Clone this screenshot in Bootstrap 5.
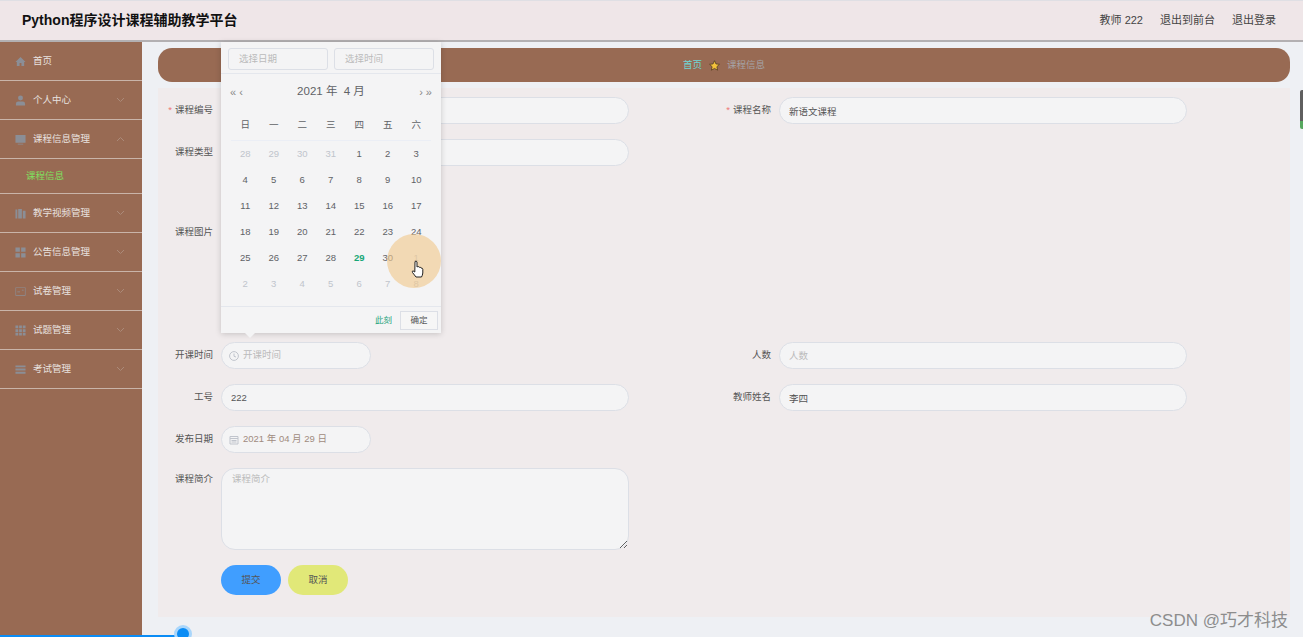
<!DOCTYPE html>
<html lang="zh">
<head>
  <meta charset="UTF-8">
  <meta name="viewport" content="width=device-width, initial-scale=1.0">
  <title>Python程序设计课程辅助教学平台</title>
  <link href="https://cdn.jsdelivr.net/npm/bootstrap@5.3.0/dist/css/bootstrap.min.css" rel="stylesheet">
  <style>
    html, body { height: 100%; overflow: hidden; }
    body { font-family: "Liberation Sans", "Noto Sans CJK SC", sans-serif; background: #eef0f4; font-size: 9.5px; color: #555; }
    .top-bar { height: 42px; background: #efe6e8; border-top: 1px solid #dfdfe4; border-bottom: 2px solid #b3b0b2; padding: 0 27px 0 22px; }
    .top-title { font-size: 14px; font-weight: 700; color: #111; }
    .top-links { font-size: 11px; color: #444; gap: 17px; }
    .side-menu { width: 142px; height: 595px; background: #986a53; color: #e9e3e0; }
    .side-item { height: 39px; border-bottom: 1px solid #c9b4a9; padding: 0 15px; gap: 7px; font-size: 9.5px; }
    .side-item svg.ico { width: 11px; height: 11px; fill: #8b8e96; flex: none; }
    .side-item svg.chev { width: 9px; height: 6px; margin-left: auto; margin-right: 2px; fill: none; stroke: #ab8a79; stroke-width: 1; }
    .side-sub { height: 35px; border-bottom: 1px solid #c9b4a9; padding-left: 26px; color: #7fe05f; font-size: 9.5px; }
    .content-area { padding: 6px 13px 0 16px; }
    .crumb-bar { height: 34px; background: #986a53; border-radius: 14px; font-size: 9.5px; gap: 7px; margin-bottom: 6px; }
    .crumb-home { color: #6fd6d6; }
    .crumb-now { color: #a5a3a6; }
    .form-panel { height: 529px; background: #f0ebec; padding: 9px 8px 0; }
    .field-row { margin-bottom: 15px; }
    .field-label { width: 47px; flex: none; text-align: right; margin-right: 8px; white-space: nowrap; color: #555; }
    .field-label i { color: #e77; font-style: normal; margin-right: 3px; }
    .pill-input.form-control { width: 408px; height: 27px; border-radius: 14px; background: #f4f4f5; border: 1px solid #dcdfe6; font-size: 9.5px; color: #555; padding: 0 9px; box-shadow: none; }
    .pill-input.form-control::placeholder { color: #bbb; }
    .pill-short { width: 150px; height: 27px; border-radius: 14px; background: #f4f4f5; border: 1px solid #dcdfe6; padding: 0 7px; gap: 4px; color: #bbb; }
    .pill-short svg { width: 10px; height: 10px; fill: none; stroke: #c0c4cc; stroke-width: 1; flex: none; }
    .date-val { color: #a08b80; }
    .upload-row { height: 146px; margin-bottom: 15px; padding-top: 44px; }
    .memo-box.form-control { width: 408px; height: 82px; border-radius: 14px; background: #f4f4f5; border: 1px solid #dcdfe6; font-size: 9.5px; padding: 3px 10px; box-shadow: none; }
    .memo-box.form-control::placeholder { color: #bbb; }
    .form-btns { margin-left: 55px; gap: 7px; }
    .form-btns .btn { width: 60px; height: 30px; border-radius: 15px; border: 0; font-size: 9.5px; padding: 0; color: #555; }
    .btn-send { background: #409eff; }
    .btn-back { background: #e1e878; }
    /* date picker popup */
    .date-pop { position: absolute; left: 221px; top: 42px; width: 220px; height: 291px; background: #f4f4f5; box-shadow: 0 1px 6px rgba(0,0,0,.18); z-index: 5; }
    .date-pop::after { content: ""; position: absolute; left: 24px; bottom: -5px; border-left: 5px solid transparent; border-right: 5px solid transparent; border-top: 5px solid #f4f4f5; }
    .pop-inputs { height: 32px; padding: 6px 7px 0; gap: 6px; border-bottom: 1px solid #e4e7ed; }
    .pop-inputs div { width: 100px; height: 22px; border: 1px solid #dcdfe6; border-radius: 3px; color: #bbb; padding-left: 10px; line-height: 20px; }
    .pop-head { height: 36px; padding: 0 9px; color: #606266; }
    .pop-head b { font-weight: 400; font-size: 11.5px; }
    .pop-head span { font-size: 11px; color: #888; line-height: 1; }
    .cal-grid { display: grid; grid-template-columns: repeat(7, 28.5px); grid-auto-rows: 26px; margin: 0 0 0 10px; text-align: center; align-items: center; color: #606266; }
    .cal-week { height: 31px; border-bottom: 1px solid #ebeef5; margin: 0 10px 0 14px; display: grid; grid-template-columns: repeat(7, 28.5px); margin-left: 10px; text-align: center; align-items: center; color: #606266; }
    .day-off { color: #c0c4cc; }
    .day-today { color: #16a777; font-weight: 700; }
    .pop-foot { position: absolute; left: 0; right: 0; bottom: 0; height: 27px; border-top: 1px solid #e4e7ed; padding-right: 3px; gap: 8px; }
    .pop-now { color: #2ba57e; font-size: 8.5px; }
    .pop-ok { width: 38px; height: 19px; border: 1px solid #dcdfe6; background: #f6f6f6; font-size: 8.5px; color: #555; text-align: center; line-height: 17px; }
    .click-mark { position: absolute; left: 387px; top: 234px; width: 54px; height: 54px; border-radius: 50%; background: rgba(240,200,140,.62); z-index: 6; }
    .hand-cursor { position: absolute; left: 411px; top: 260px; width: 13px; height: 18px; z-index: 7; }
    /* video progress + watermark */
    .play-line { position: absolute; left: 0; bottom: 0; width: 183px; height: 2px; background: #0a8cf5; z-index: 7; }
    .play-dot { position: absolute; left: 177px; top: 628px; width: 12px; height: 12px; border-radius: 50%; background: #0a8cf5; box-shadow: 0 0 0 3px #a9d6fb; z-index: 7; }
    .edge-mark { position: absolute; right: 0; top: 90px; width: 3px; height: 39px; background: linear-gradient(#5f5f5f 80%, #57a85f 80%); border-radius: 2px 0 0 2px; }
    .wm-text { position: absolute; right: 15px; top: 608px; font-size: 17px; color: #8d8d8d; z-index: 7; }
  </style>
</head>
<body>
  <header class="top-bar d-flex align-items-center justify-content-between">
    <div class="top-title">Python程序设计课程辅助教学平台</div>
    <div class="top-links d-flex"><span>教师 222</span><span>退出到前台</span><span>退出登录</span></div>
  </header>

  <div class="d-flex">
    <aside class="side-menu flex-shrink-0">
      <div class="side-item d-flex align-items-center">
        <svg class="ico" viewBox="0 0 12 12"><path d="M6 1 0.5 6.5H2V11h3V7.5h2V11h3V6.5h1.500z"/></svg>首页
      </div>
      <div class="side-item d-flex align-items-center">
        <svg class="ico" viewBox="0 0 12 12"><circle cx="6" cy="3.200" r="2.700"/><path d="M1 11.500V9.500Q1 7 3.500 7h5Q11 7 11 9.500v2z"/></svg>个人中心
        <svg class="chev" viewBox="0 0 9 6"><path d="M1 1l3.500 3.500L8 1"/></svg>
      </div>
      <div class="side-item d-flex align-items-center">
        <svg class="ico" viewBox="0 0 12 12"><path d="M.5 1h11v8.500H.5zM3 10.500h6V11.500H3z"/></svg>课程信息管理
        <svg class="chev" viewBox="0 0 9 6"><path d="M1 5l3.500-3.500L8 5"/></svg>
      </div>
      <div class="side-sub d-flex align-items-center">课程信息</div>
      <div class="side-item d-flex align-items-center">
        <svg class="ico" viewBox="0 0 12 12"><path d="M.5 1.500h2v10h-2zM3.500 1h4v10.500h-4zM8.500 3h3v8.500h-3z"/></svg>教学视频管理
        <svg class="chev" viewBox="0 0 9 6"><path d="M1 1l3.500 3.500L8 1"/></svg>
      </div>
      <div class="side-item d-flex align-items-center">
        <svg class="ico" viewBox="0 0 12 12"><path d="M.5.500h4.800v4.800H.5zM6.700.500h4.800v4.800H6.700zM.5 6.700h4.800v4.800H.5zM6.700 6.700h4.800v4.800H6.700z"/></svg>公告信息管理
        <svg class="chev" viewBox="0 0 9 6"><path d="M1 1l3.500 3.500L8 1"/></svg>
      </div>
      <div class="side-item d-flex align-items-center">
        <svg class="ico" viewBox="0 0 12 12"><path fill-rule="evenodd" d="M.5 1.500h11v9H.5zM1.200 2.200v7.600h9.600V2.200zM2.500 6h3v.8h-3zM7.500 4h2v.8h-2z"/></svg>试卷管理
        <svg class="chev" viewBox="0 0 9 6"><path d="M1 1l3.500 3.500L8 1"/></svg>
      </div>
      <div class="side-item d-flex align-items-center">
        <svg class="ico" viewBox="0 0 12 12"><path d="M.5.500h3v3h-3zM4.500.500h3v3h-3zM8.500.500h3v3h-3zM.5 4.500h3v3h-3zM4.500 4.500h3v3h-3zM8.500 4.500h3v3h-3zM.5 8.500h3v3h-3zM4.500 8.500h3v3h-3zM8.500 8.500h3v3h-3z"/></svg>试题管理
        <svg class="chev" viewBox="0 0 9 6"><path d="M1 1l3.500 3.500L8 1"/></svg>
      </div>
      <div class="side-item d-flex align-items-center">
        <svg class="ico" viewBox="0 0 12 12"><path d="M.5 1.500h11v2h-11zM.5 5h11v2h-11zM.5 8.500h11v2h-11z"/></svg>考试管理
        <svg class="chev" viewBox="0 0 9 6"><path d="M1 1l3.500 3.500L8 1"/></svg>
      </div>
    </aside>

    <main class="content-area flex-grow-1">
      <div class="crumb-bar d-flex align-items-center justify-content-center">
        <span class="crumb-home">首页</span>
        <svg width="11" height="11" viewBox="0 0 12 12"><path d="M6 .8 7.600 4.300 11.400 4.700 8.600 7.300 9.400 11.100 6 9.200 2.600 11.100 3.400 7.300.6 4.700 4.400 4.300z" fill="#f3c23c" stroke="#4b3a20" stroke-width=".8"/></svg>
        <span class="crumb-now">课程信息</span>
      </div>

      <form class="form-panel">
        <div class="row g-0 field-row">
          <div class="col-6 d-flex align-items-center">
            <label class="field-label"><i>*</i>课程编号</label>
            <input class="form-control pill-input" placeholder="课程编号">
          </div>
          <div class="col-6 d-flex align-items-center">
            <label class="field-label"><i>*</i>课程名称</label>
            <input class="form-control pill-input" value="新语文课程">
          </div>
        </div>
        <div class="d-flex align-items-center field-row">
          <label class="field-label">课程类型</label>
          <input class="form-control pill-input" placeholder="请选择">
        </div>
        <div class="upload-row d-flex align-items-start">
          <label class="field-label">课程图片</label>
        </div>
        <div class="row g-0 field-row">
          <div class="col-6 d-flex align-items-center">
            <label class="field-label">开课时间</label>
            <div class="pill-short d-flex align-items-center">
              <svg viewBox="0 0 10 10"><circle cx="5" cy="5" r="4.400"/><path d="M5 2.500V5.300L7 6"/></svg>开课时间
            </div>
          </div>
          <div class="col-6 d-flex align-items-center">
            <label class="field-label">人数</label>
            <input class="form-control pill-input" placeholder="人数">
          </div>
        </div>
        <div class="row g-0 field-row">
          <div class="col-6 d-flex align-items-center">
            <label class="field-label">工号</label>
            <input class="form-control pill-input" value="222">
          </div>
          <div class="col-6 d-flex align-items-center">
            <label class="field-label">教师姓名</label>
            <input class="form-control pill-input" value="李四">
          </div>
        </div>
        <div class="d-flex align-items-center field-row">
          <label class="field-label">发布日期</label>
          <div class="pill-short d-flex align-items-center">
            <svg viewBox="0 0 10 10"><path d="M1 1.500h8v7.500H1zM1 3.500h8M2.500 5.500h5M2.500 7h5"/></svg><span class="date-val">2021 年 04 月 29 日</span>
          </div>
        </div>
        <div class="d-flex align-items-start field-row">
          <label class="field-label pt-1">课程简介</label>
          <textarea class="form-control memo-box" placeholder="课程简介"></textarea>
        </div>
        <div class="form-btns d-flex">
          <button type="button" class="btn btn-send">提交</button>
          <button type="button" class="btn btn-back">取消</button>
        </div>
      </form>
    </main>
  </div>

  <div class="date-pop">
    <div class="pop-inputs d-flex"><div>选择日期</div><div>选择时间</div></div>
    <div class="pop-head d-flex align-items-center justify-content-between">
      <span>«&nbsp;‹</span><b>2021 年&nbsp; 4 月</b><span>›&nbsp;»</span>
    </div>
    <div class="cal-week"><span>日</span><span>一</span><span>二</span><span>三</span><span>四</span><span>五</span><span>六</span></div>
    <div class="cal-grid" id="calGrid"></div>
    <div class="pop-foot d-flex align-items-center justify-content-end">
      <span class="pop-now">此刻</span><div class="pop-ok">确定</div>
    </div>
  </div>

  <div class="click-mark"></div>
  <svg class="hand-cursor" viewBox="0 0 13 18"><path d="M4 1.500Q5.200.5 6 1.800V7L6.800 6.600Q8 6.400 8.300 7.300 9.500 6.800 10 8 11.500 7.800 11.800 9.200V13Q11.500 15.500 10.500 17H5L1.500 12.500Q.8 11 2 10.800L3.800 12z" fill="#fff" stroke="#222" stroke-width="1"/></svg>

  <div class="play-line"></div>
  <div class="play-dot"></div>
  <div class="edge-mark"></div>
  <div class="wm-text">CSDN @巧才科技</div>

  <script>
    // 4月日历: 前后补上月和下月的日期
    const days = [];
    [28, 29, 30, 31].forEach(d => days.push({ d, cls: 'day-off' }));
    for (let d = 1; d <= 30; d++) days.push({ d, cls: d === 29 ? 'day-today' : '' });
    for (let d = 1; d <= 8; d++) days.push({ d, cls: 'day-off' });
    document.getElementById('calGrid').innerHTML = days.map(x => `<span class="${x.cls}">${x.d}</span>`).join('');
  </script>
  <script src="https://cdn.jsdelivr.net/npm/bootstrap@5.3.0/dist/js/bootstrap.bundle.min.js"></script>
</body>
</html>
